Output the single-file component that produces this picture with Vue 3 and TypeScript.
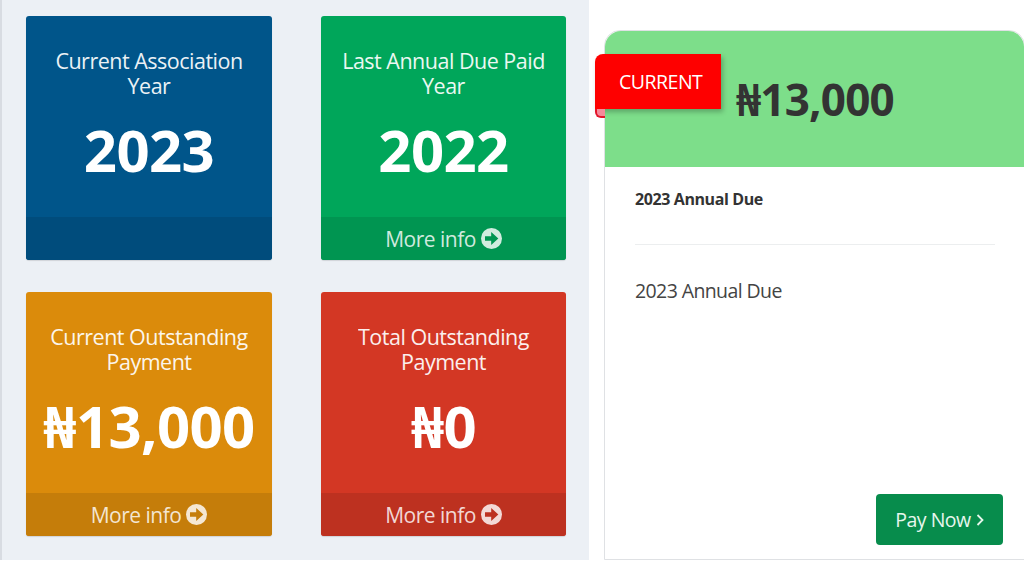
<script setup lang="ts">
interface Box { title: string; value: string; color: string; foot: string; more: boolean }
const boxes: Box[] = [
  { title: 'Current Association Year', value: '2023', color: '#00558a', foot: '#004c7c', more: false },
  { title: 'Last Annual Due Paid Year', value: '2022', color: '#00a65a', foot: '#009551', more: true },
  { title: 'Current Outstanding Payment', value: '₦13,000', color: '#db8b0b', foot: '#c57d0a', more: true },
  { title: 'Total Outstanding Payment', value: '₦0', color: '#d33724', foot: '#bd3120', more: true },
]
</script>

<template>
  <div class="page">
    <section class="left">
      <article v-for="b in boxes" :key="b.value" class="box" :style="{ background: b.color }">
        <div class="inner">
          <p class="title">{{ b.title }}</p>
          <h3 class="value">{{ b.value }}</h3>
        </div>
        <div class="foot" :style="{ background: b.foot }">
          <template v-if="b.more">
            <span>More info</span>
            <svg class="arrow" viewBox="0 0 20 20" aria-hidden="true">
              <circle cx="10" cy="10" r="10" fill="currentColor" />
              <path d="M3.800 7.800h5.900V3.800L16.500 10l-6.800 6.200v-4H3.800z" :fill="b.foot" />
            </svg>
          </template>
        </div>
      </article>
    </section>
    <section class="right">
      <div class="plan">
        <header class="plan-head">
          <div class="ribbon">CURRENT</div>
          <span class="price">₦13,000</span>
        </header>
        <div class="plan-body">
          <h4 class="plan-name">2023 Annual Due</h4>
          <hr class="rule" />
          <p class="plan-text">2023 Annual Due</p>
          <div class="actions">
            <button class="pay" type="button">Pay Now
              <svg class="chev" viewBox="0 0 8 12" aria-hidden="true"><path d="M1.500 1 6.500 6 1.500 11" fill="none" stroke="currentColor" stroke-width="1.800" /></svg>
            </button>
          </div>
        </div>
      </div>
    </section>
  </div>
</template>

<style>
html, body { margin: 0; background: #fff; }
</style>

<style scoped>
.page {
  width: 1024px;
  height: 574px;
  display: flex;
  align-items: flex-start;
  overflow: hidden;
  font-family: "Open Sans", "Noto Sans", "Liberation Sans", sans-serif;
  background: #fff;
}
.left {
  width: 589px;
  height: 560px;
  box-sizing: border-box;
  flex: none;
  background: #ecf0f5;
  border-left: 2px solid #d8dce2;
  padding: 16px 24px 0 24px;
  display: grid;
  grid-template-columns: 246px 245px;
  grid-auto-rows: 244px;
  column-gap: 49px;
  row-gap: 32px;
}
.box {
  display: flex;
  flex-direction: column;
  border-radius: 3px;
  color: #fff;
  box-shadow: 0 1px 1px rgba(0, 0, 0, 0.12);
}
.inner {
  flex: 1;
  padding: 32px 18px 0;
  text-align: center;
}
.title {
  margin: 0;
  font-size: 21.500px;
  line-height: 25px;
  letter-spacing: -0.5px;
  opacity: 0.92;
}
.value {
  margin: 16px -18px 0;
  font-size: 58px;
  line-height: 72px;
  font-weight: 700;
  letter-spacing: -0.6px;
}
.foot {
  height: 43px;
  flex: none;
  border-radius: 0 0 3px 3px;
  display: flex;
  align-items: center;
  justify-content: center;
  gap: 5px;
  font-size: 21px;
  letter-spacing: -0.5px;
  color: rgba(255, 255, 255, 0.82);
}
.arrow { width: 21px; height: 21px; }
.right {
  flex: 1;
  padding: 30px 0 0 15px;
  min-width: 0;
}
.plan {
  width: 421px;
  height: 530px;
  box-sizing: border-box;
  border: 1px solid #dfe1e4;
  border-radius: 16px 16px 0 0;
  display: flex;
  flex-direction: column;
}
.plan-head {
  position: relative;
  height: 136px;
  flex: none;
  background: #7dde8a;
  border-radius: 16px 16px 0 0;
  display: flex;
  align-items: center;
  padding-left: 131px;
  box-sizing: border-box;
}
.ribbon {
  position: absolute;
  left: -10px;
  top: 23px;
  width: 126px;
  height: 55px;
  box-sizing: border-box;
  padding: 15px 0 0 24px;
  background: #fe0000;
  color: #fff;
  font-size: 19.500px;
  line-height: 25px;
  letter-spacing: -0.5px;
  border-radius: 8px 0 0 0;
  box-shadow: 2px 3px 5px rgba(0, 0, 0, 0.25);
}
.ribbon::after {
  content: "";
  position: absolute;
  left: 0;
  top: 55px;
  width: 10px;
  height: 9px;
  box-sizing: border-box;
  background: #f58a9a;
  border: 2px solid #e3142a;
  border-top: none;
  border-right: none;
  border-radius: 0 0 0 6px;
}
.price {
  font-size: 44px;
  font-weight: 700;
  color: #333;
  letter-spacing: -0.8px;
}
.plan-body {
  flex: 1;
  display: flex;
  flex-direction: column;
  padding: 22px 21px 14px 30px;
}
.plan-name {
  margin: 0;
  font-size: 16px;
  line-height: 20px;
  font-weight: 700;
  color: #333;
  letter-spacing: -0.4px;
}
.rule {
  width: 360px;
  margin: 35px 0 0;
  border: none;
  border-top: 1px solid #eceeef;
}
.plan-text {
  margin: 34px 0 0;
  font-size: 19.500px;
  line-height: 24px;
  color: #444;
  letter-spacing: -0.6px;
}
.actions {
  margin-top: auto;
  display: flex;
  justify-content: flex-end;
}
.pay {
  width: 127px;
  height: 51px;
  border: none;
  border-radius: 4px;
  background: #078c4c;
  color: #e6f6ec;
  font: inherit;
  font-size: 19.500px;
  letter-spacing: -0.5px;
  display: flex;
  align-items: center;
  justify-content: center;
  gap: 5px;
  padding: 0;
}
.chev { width: 8px; height: 12px; }
</style>
